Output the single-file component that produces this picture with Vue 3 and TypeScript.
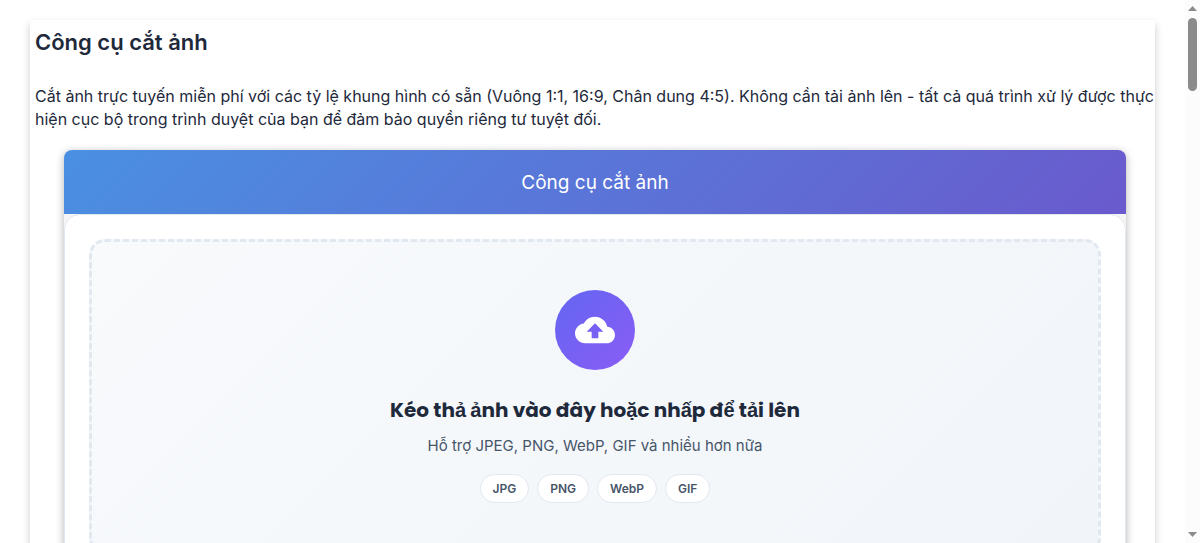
<script setup lang="ts">
const formats: string[] = ['JPG', 'PNG', 'WebP', 'GIF']
</script>

<template>
  <div class="shell">
    <div class="page">
      <main class="card">
        <h1 class="title">Công cụ cắt ảnh</h1>
        <p class="intro">
          Cắt ảnh trực tuyến miễn phí với các tỷ lệ khung hình có sẵn (Vuông 1:1, 16:9, Chân dung 4:5). Không cần tải ảnh lên - tất cả quá trình xử lý được thực hiện cục bộ trong trình duyệt của bạn để đảm bảo quyền riêng tư tuyệt đối.
        </p>
        <section class="tool">
          <header class="tool-head">Công cụ cắt ảnh</header>
          <div class="panel">
            <button type="button" class="drop">
              <span class="badge">
                <svg viewBox="0 0 24 24" width="40" height="40" aria-hidden="true">
                  <path fill="#fff" d="M19.35 10.04C18.67 6.59 15.64 4 12 4 9.11 4 6.6 5.64 5.35 8.04 2.34 8.36 0 10.91 0 14c0 3.31 2.69 6 6 6h13c2.76 0 5-2.24 5-5 0-2.64-2.05-4.78-4.65-4.96zM14 13v4h-4v-4H7l5-5 5 5h-3z" />
                </svg>
              </span>
              <span class="drop-title">Kéo thả ảnh vào đây hoặc nhấp để tải lên</span>
              <span class="drop-sub">Hỗ trợ JPEG, PNG, WebP, GIF và nhiều hơn nữa</span>
              <span class="formats">
                <span v-for="f in formats" :key="f" class="format">{{ f }}</span>
              </span>
            </button>
          </div>
        </section>
      </main>
    </div>
    <div class="scrollbar" aria-hidden="true">
      <svg class="arrow" width="9" height="5" viewBox="0 0 9 5"><path fill="#8b8b8b" d="M0 5 4.5 0 9 5z" /></svg>
      <div class="track"><div class="thumb"></div></div>
      <svg class="arrow" width="9" height="5" viewBox="0 0 9 5"><path fill="#8b8b8b" d="M0 0h9L4.5 5z" /></svg>
    </div>
  </div>
</template>

<style>
body {
  margin: 0;
  background: #fff;
}
</style>

<style scoped>
.shell {
  display: flex;
  height: 100vh;
  overflow: hidden;
  font-family: Inter, "Liberation Sans", sans-serif;
  font-size: 16px;
  color: #1e293b;
}
.page {
  flex: 1;
  min-width: 0;
  overflow: hidden;
  padding: 20px 30px;
}
.card {
  padding: 5px 0 30px 5px;
  background: #fff;
  box-shadow: 0 4px 8px rgba(0, 0, 0, 0.2);
}
.title {
  margin: 0;
  font-size: 22px;
  font-weight: 600;
  line-height: 34px;
}
.intro {
  margin: 26px 0 19px;
  line-height: 23px;
}
.tool {
  margin: 0 29px;
  border-radius: 8px;
  overflow: hidden;
  background: #f5f5f5;
  box-shadow: 0 2px 8px rgba(0, 0, 0, 0.3);
}
.tool-head {
  padding: 17px 16px 15px;
  line-height: 32px;
  font-size: 19px;
  text-align: center;
  color: #fff;
  background: linear-gradient(135deg, #4a90e2, #6a5acd);
}
.panel {
  padding: 24px;
  background: #fff;
  border: 1px solid #e2e8f0;
  border-radius: 16px;
}
.drop {
  display: flex;
  flex-direction: column;
  align-items: center;
  width: 100%;
  padding: 48px 32px;
  border: 3px dashed #e2e8f0;
  border-radius: 16px;
  background: linear-gradient(135deg, #f8fafc, #f1f5f9);
  font: inherit;
  color: inherit;
  cursor: pointer;
}
.badge {
  display: flex;
  align-items: center;
  justify-content: center;
  width: 80px;
  height: 80px;
  border-radius: 50%;
  background: linear-gradient(135deg, #6366f1, #8b5cf6);
}
.drop-title {
  margin-top: 24px;
  font-family: Poppins, sans-serif;
  font-size: 20px;
  font-weight: 700;
  line-height: 32px;
}
.drop-sub {
  margin-top: 8px;
  font-size: 15px;
  line-height: 24px;
  color: #475569;
}
.formats {
  display: flex;
  gap: 8px;
  margin-top: 16px;
}
.format {
  padding: 4px 12px;
  border: 1px solid #e2e8f0;
  border-radius: 20px;
  background: #fff;
  font-size: 12px;
  font-weight: 600;
  line-height: 19px;
  color: #475569;
}
.scrollbar {
  display: flex;
  flex-direction: column;
  align-items: center;
  width: 15px;
  padding: 6px 0;
  box-sizing: border-box;
  background: #fcfcfc;
}
.track {
  flex: 1;
  width: 9px;
  padding-top: 7px;
}
.thumb {
  height: 14%;
  min-height: 73px;
  border-radius: 5px;
  background: #8b8b8b;
}
</style>
